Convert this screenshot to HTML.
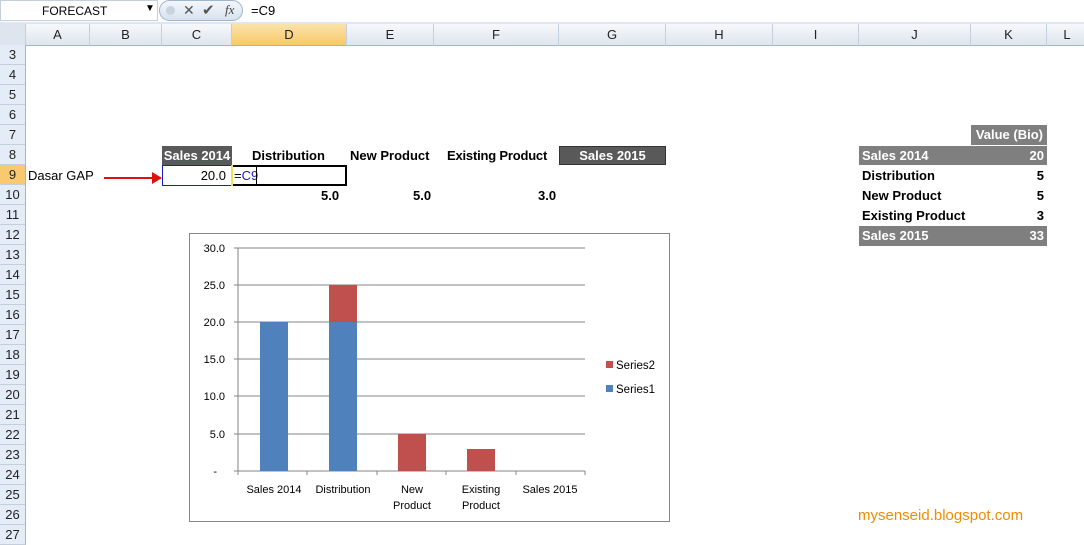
<!DOCTYPE html><html><head><style>
body{margin:0;width:1084px;height:533px;overflow:hidden;background:#fff;font-family:"Liberation Sans",sans-serif;font-size:12px;position:relative}
.a{position:absolute;white-space:nowrap}
.ch{position:absolute;top:24px;height:21px;background:linear-gradient(#f6f8fb,#dfe5ee);border-right:1px solid #c5cfdc;border-bottom:1px solid #9eb6ce;text-align:center;line-height:21px;font-size:13px;color:#222}
.rh{position:absolute;left:0;width:25px;height:19px;background:#e4ecf7;border-right:1px solid #9eb6ce;border-bottom:1px solid #c5cfdc;text-align:center;line-height:19px;font-size:13px;color:#222}
.b{font-weight:bold;font-size:13px}
.g{background:#7f7f7f;color:#fff}
</style></head><body>
<div class="a" style="left:0;top:0;width:1084px;height:22px;background:#fff;border-bottom:1px solid #c5cfdc"></div>
<div class="a" style="left:0;top:0;width:158px;height:21px;border:1px solid #c5cfdc;box-sizing:border-box"></div>
<div class="a" style="left:42px;top:4px;font-size:12px">FORECAST</div>
<div class="a" style="left:145px;top:3px;font-size:10px">▼</div>
<div class="a" style="left:159px;top:0;width:84px;height:21px;border:1px solid #9eb6ce;border-radius:11px;background:linear-gradient(#f4f7fb,#d8e2ee);box-sizing:border-box"></div>
<div class="a" style="left:166px;top:6px;width:9px;height:9px;border-radius:50%;background:#c9d3df"></div>
<div class="a" style="left:183px;top:2px;font-size:14px;color:#555">✕</div>
<div class="a" style="left:202px;top:1px;font-size:15px;color:#555">✔</div>
<div class="a" style="left:225px;top:2px;font-size:13px;font-style:italic;font-family:'Liberation Serif';color:#444">fx</div>
<div class="a" style="left:251px;top:3px;font-size:13px">=C9</div>
<div class="a" style="left:0;top:22px;width:1084px;height:2px;background:#dfe6ef"></div>
<div class="ch" style="left:0;width:25px;background:#dfe5ee"></div>
<div class="ch" style="left:26px;width:63px">A</div>
<div class="ch" style="left:90px;width:71px">B</div>
<div class="ch" style="left:162px;width:69px">C</div>
<div class="ch" style="left:232px;width:114px;background:linear-gradient(#fbe3a9,#f7c96b);border-bottom-color:#f2a83b">D</div>
<div class="ch" style="left:347px;width:86px">E</div>
<div class="ch" style="left:434px;width:124px">F</div>
<div class="ch" style="left:559px;width:106px">G</div>
<div class="ch" style="left:666px;width:106px">H</div>
<div class="ch" style="left:773px;width:85px">I</div>
<div class="ch" style="left:859px;width:111px">J</div>
<div class="ch" style="left:971px;width:75px">K</div>
<div class="ch" style="left:1047px;width:40px">L</div>
<div class="rh" style="top:45px">3</div><div class="rh" style="top:65px">4</div><div class="rh" style="top:85px">5</div><div class="rh" style="top:105px">6</div><div class="rh" style="top:125px">7</div><div class="rh" style="top:145px">8</div>
<div class="rh" style="top:165px;background:#f8c96e">9</div><div class="rh" style="top:185px">10</div><div class="rh" style="top:205px">11</div><div class="rh" style="top:225px">12</div><div class="rh" style="top:245px">13</div><div class="rh" style="top:265px">14</div><div class="rh" style="top:285px">15</div><div class="rh" style="top:305px">16</div><div class="rh" style="top:325px">17</div><div class="rh" style="top:345px">18</div><div class="rh" style="top:365px">19</div><div class="rh" style="top:385px">20</div><div class="rh" style="top:405px">21</div><div class="rh" style="top:425px">22</div><div class="rh" style="top:445px">23</div><div class="rh" style="top:465px">24</div><div class="rh" style="top:485px">25</div><div class="rh" style="top:505px">26</div><div class="rh" style="top:525px">27</div>

<div class="a b g" style="left:162px;top:146px;width:70px;height:19px;line-height:19px;text-align:center;background:#595959">Sales 2014</div>
<div class="a b" style="left:252px;top:148px">Distribution</div>
<div class="a b" style="left:350px;top:148px">New Product</div>
<div class="a b" style="left:447px;top:148px;letter-spacing:-0.2px">Existing Product</div>
<div class="a b g" style="left:559px;top:146px;width:107px;height:19px;line-height:17px;text-align:center;background:#595959;border:1px solid #333;box-sizing:border-box">Sales 2015</div>
<div class="a" style="left:28px;top:168px;font-size:13px">Dasar GAP</div>
<div class="a" style="left:104px;top:177px;width:55px;height:2px;background:#e01010"></div>
<div class="a" style="left:152px;top:172px;width:0;height:0;border-left:10px solid #e01010;border-top:6px solid transparent;border-bottom:6px solid transparent"></div>
<div class="a" style="left:162px;top:165px;width:68px;height:19px;border:1px solid #1a1ad0"></div>
<div class="a" style="left:172px;top:168px;width:54px;text-align:right;font-size:13px">20.0</div>
<div class="a" style="left:231px;top:165px;width:116px;border:2px solid #000;box-sizing:border-box;height:21px"></div>
<div class="a" style="left:231px;top:165px;width:2px;height:21px;background:#f4e04a"></div>
<div class="a" style="left:234px;top:168px;font-size:13px">=<span style="color:#1a1ad0">C9</span></div>
<div class="a" style="left:256px;top:167px;width:1px;height:17px;background:#000"></div>
<div class="a b" style="left:321px;top:188px">5.0</div>
<div class="a b" style="left:413px;top:188px">5.0</div>
<div class="a b" style="left:538px;top:188px">3.0</div>

<div class="a b" style="left:971px;top:125px;width:76px;height:20px;line-height:20px;text-align:right;padding-right:4px;box-sizing:border-box;background:#7f7f7f;color:#fff">Value (Bio)</div>
<div class="a b g" style="left:859px;top:146px;width:188px;height:19px;line-height:19px"><span style="position:absolute;left:3px">Sales 2014</span><span style="position:absolute;right:3px">20</span></div>
<div class="a b" style="left:859px;top:166px;width:188px;height:19px;line-height:19px"><span style="position:absolute;left:3px">Distribution</span><span style="position:absolute;right:3px">5</span></div>
<div class="a b" style="left:859px;top:186px;width:188px;height:19px;line-height:19px"><span style="position:absolute;left:3px">New Product</span><span style="position:absolute;right:3px">5</span></div>
<div class="a b" style="left:859px;top:206px;width:188px;height:19px;line-height:19px"><span style="position:absolute;left:3px">Existing Product</span><span style="position:absolute;right:3px">3</span></div>
<div class="a b g" style="left:859px;top:226px;width:188px;height:20px;line-height:20px"><span style="position:absolute;left:3px">Sales 2015</span><span style="position:absolute;right:3px">33</span></div>

<svg class="a" style="left:189px;top:233px" width="481" height="289" font-family="Liberation Sans" font-size="11">
<rect x="0.5" y="0.5" width="480" height="288" fill="#fff" stroke="#868686"/>
<g stroke="#868686">
<line x1="49" y1="15" x2="396" y2="15"/><line x1="49" y1="52" x2="396" y2="52"/><line x1="49" y1="89" x2="396" y2="89"/><line x1="49" y1="126" x2="396" y2="126"/><line x1="49" y1="163" x2="396" y2="163"/><line x1="49" y1="201" x2="396" y2="201"/><line x1="49" y1="238" x2="396" y2="238"/>
<line x1="49" y1="15" x2="49" y2="242"/>
<line x1="45" y1="15" x2="49" y2="15"/><line x1="45" y1="52" x2="49" y2="52"/><line x1="45" y1="89" x2="49" y2="89"/><line x1="45" y1="126" x2="49" y2="126"/><line x1="45" y1="163" x2="49" y2="163"/><line x1="45" y1="201" x2="49" y2="201"/><line x1="45" y1="238" x2="49" y2="238"/>
<line x1="118" y1="238" x2="118" y2="242"/><line x1="188" y1="238" x2="188" y2="242"/><line x1="257" y1="238" x2="257" y2="242"/><line x1="327" y1="238" x2="327" y2="242"/><line x1="396" y1="238" x2="396" y2="242"/>
</g>
<rect x="71" y="89" width="28" height="149" fill="#4f81bd"/>
<rect x="140" y="89" width="28" height="149" fill="#4f81bd"/>
<rect x="140" y="52" width="28" height="37" fill="#c0504d"/>
<rect x="209" y="201" width="28" height="37" fill="#c0504d"/>
<rect x="278" y="216" width="28" height="22" fill="#c0504d"/>
<g text-anchor="end"><text x="36" y="19">30.0</text><text x="36" y="56">25.0</text><text x="36" y="93">20.0</text><text x="36" y="130">15.0</text><text x="36" y="167">10.0</text><text x="36" y="205">5.0</text><text x="28" y="242">-</text></g>
<g text-anchor="middle"><text x="85" y="260">Sales 2014</text><text x="154" y="260">Distribution</text><text x="223" y="260">New</text><text x="223" y="276">Product</text><text x="292" y="260">Existing</text><text x="292" y="276">Product</text><text x="361" y="260">Sales 2015</text></g>
<rect x="417" y="128" width="7" height="7" fill="#c0504d"/><text x="427" y="136" font-size="11.5">Series2</text>
<rect x="417" y="152" width="7" height="7" fill="#4f81bd"/><text x="427" y="160" font-size="11.5">Series1</text>
</svg>
<div class="a" style="left:858px;top:507px;font-size:15px;color:#f08c00">mysenseid.blogspot.com</div>
</body></html>
